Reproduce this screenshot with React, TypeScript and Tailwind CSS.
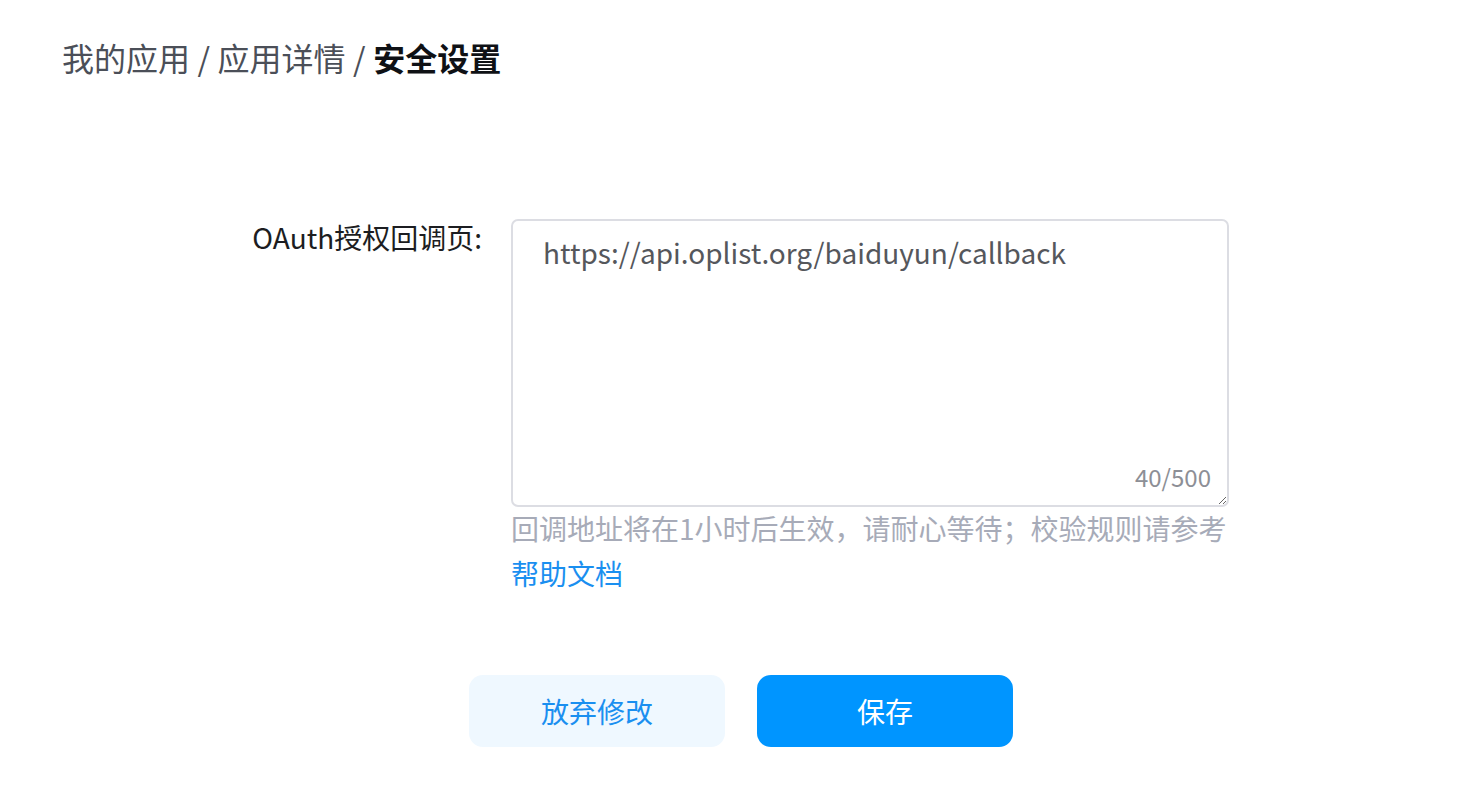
import React from 'react';

const font = { fontFamily: '"Noto Sans CJK SC", "Noto Sans", sans-serif' };

const callbackUrl = 'https://api.oplist.org/baiduyun/callback';

const App = (): React.ReactElement => (
  <div className="min-h-[801px] w-full bg-white" style={font}>
    <div className="pl-[62px] pt-[35px]">
      <div className="flex items-center text-[32px] leading-[44px] text-[#4b4f58]">
        <span>我的应用</span>
        <span className="px-[7.5px]">/</span>
        <span>应用详情</span>
        <span className="px-[7.5px]">/</span>
        <span className="font-bold text-[#0f1115]">安全设置</span>
      </div>
    </div>

    <div className="mt-[140px] flex">
      <label className="w-[482px] shrink-0 text-right text-[28px] leading-[36px] text-[#1c1d21]">
        OAuth授权回调页:
      </label>
      <div className="ml-[29px] w-[718px]">
        <div className="relative">
          <textarea
            readOnly
            defaultValue={callbackUrl}
            className="block h-[288px] w-full resize-y rounded-[7px] border-2 border-[#dcdde3] px-[30px] pt-[11px] text-[28px] leading-[40px] text-[#55575c] outline-none"
            style={font}
          />
          <span className="absolute bottom-[15px] right-[18px] text-[24px] leading-[30px] text-[#8d8f96]">
            40/500
          </span>
        </div>
        <p className="mt-[-1px] text-[28px] leading-[45px] text-[#a7abb8]">
          回调地址将在1小时后生效，请耐心等待；校验规则请参考
          <a className="text-[#1a8ff0]">帮助文档</a>
        </p>
      </div>
    </div>

    <div className="mt-[79px] flex gap-[32px] pl-[469px]">
      <button className="h-[72px] w-[256px] rounded-[14px] bg-[#eff8ff] text-[28px] text-[#1a8ff0]" style={font}>
        放弃修改
      </button>
      <button className="h-[72px] w-[256px] rounded-[14px] bg-[#0095ff] text-[28px] text-white" style={font}>
        保存
      </button>
    </div>
  </div>
);

export default App;
